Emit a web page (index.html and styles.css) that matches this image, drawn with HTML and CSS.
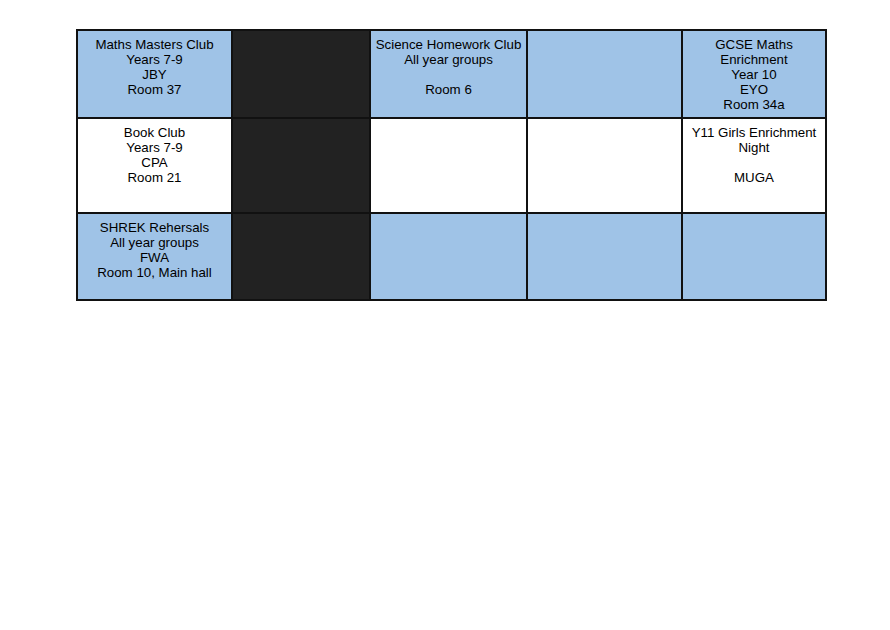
FILE: index.html
```html
<!DOCTYPE html>
<html>
<head>
<meta charset="utf-8">
<link rel="stylesheet" href="styles.css">
</head>
<body>
<table class="grid">
  <colgroup>
    <col class="c1"><col class="c2"><col class="c3"><col class="c4"><col class="c5">
  </colgroup>
  <tr class="r1">
    <td class="blue">Maths Masters Club<br>Years 7-9<br>JBY<br>Room 37</td>
    <td class="dark"></td>
    <td class="blue">Science Homework Club<br>All year groups<br>&nbsp;<br>Room 6</td>
    <td class="blue"></td>
    <td class="blue">GCSE Maths<br>Enrichment<br>Year 10<br>EYO<br>Room 34a</td>
  </tr>
  <tr class="r2">
    <td class="white">Book Club<br>Years 7-9<br>CPA<br>Room 21</td>
    <td class="dark"></td>
    <td class="white"></td>
    <td class="white"></td>
    <td class="white">Y11 Girls Enrichment<br>Night<br>&nbsp;<br>MUGA</td>
  </tr>
  <tr class="r3">
    <td class="blue">SHREK Rehersals<br>All year groups<br>FWA<br>Room 10, Main hall</td>
    <td class="dark"></td>
    <td class="blue"></td>
    <td class="blue"></td>
    <td class="blue"></td>
  </tr>
</table>
</body>
</html>
```
FILE: styles.css
```css
html, body {
  margin: 0;
  padding: 0;
  background: #ffffff;
}
body {
  padding: 29px 0 0 76px;
  font-family: "Liberation Sans", Arial, sans-serif;
  font-size: 13.3px;
  color: #000;
}
.grid {
  border-collapse: collapse;
  table-layout: fixed;
  width: 749px;
}
.c1 { width: 155px; }
.c2 { width: 138px; }
.c3 { width: 157px; }
.c4 { width: 155px; }
.c5 { width: 144px; }
.grid td {
  border: 2px solid #111;
  padding: 6px 1px 0 1px;
  vertical-align: top;
  text-align: center;
  line-height: 15px;
}
.r1 td { height: 80px; }
.r2 td { height: 87px; }
.r3 td { height: 79px; }
.blue { background: #9fc3e7; }
.white { background: #ffffff; }
.dark { background: #222222; }
```
